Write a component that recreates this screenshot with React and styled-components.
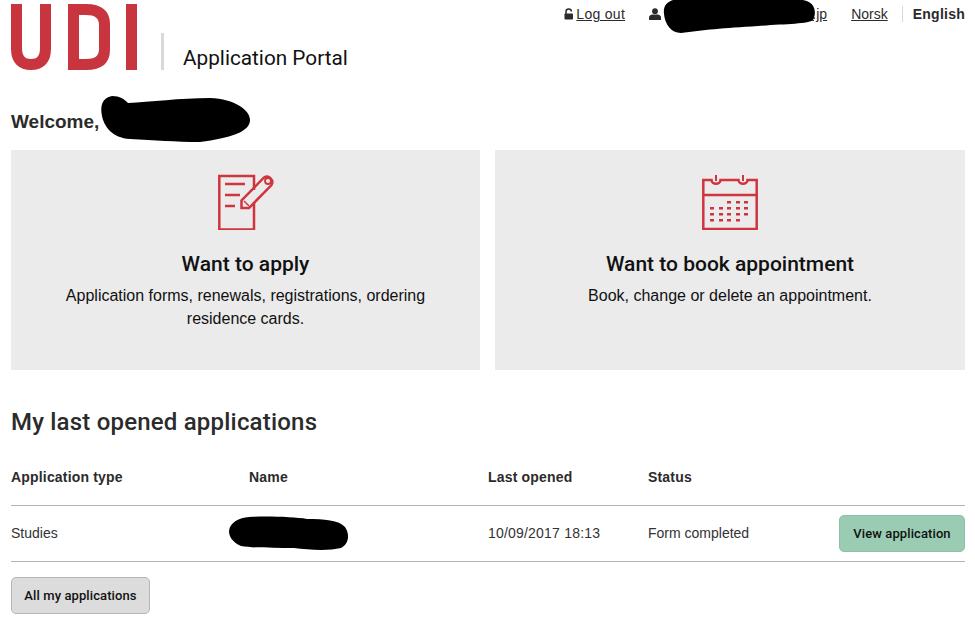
import React from "react";
import styled, { createGlobalStyle } from "styled-components";

const GlobalStyle = createGlobalStyle`
    html, body {
        margin: 0;
        padding: 0;
        background: #fff;
        color: #2b2b2b;
        font-family: "Liberation Sans", Arial, sans-serif;
    }
`;

const Page = styled.div`
    position: relative;
    width: 975px;
    height: 625px;
    overflow: hidden;
    box-sizing: border-box;
    padding: 0 10px 0 11px;
`;

const Header = styled.header`
    display: flex;
    justify-content: space-between;
    align-items: flex-start;
    height: 110px;
`;

const Brand = styled.div`
    display: flex;
    align-items: flex-end;
    padding-top: 4px;
    height: 66px;
`;

const Divider = styled.span`
    width: 3px;
    height: 37px;
    margin: 0 19px 0 24px;
    background: #d9d9d9;
`;

const PortalName = styled.span`
    font-family: Roboto, sans-serif;
    font-size: 20.75px;
    line-height: 24px;
    color: #111;
`;

const TopNav = styled.nav`
    display: flex;
    align-items: center;
    font-size: 14px;
    height: 16px;
    padding-top: 6px;
`;

const NavLink = styled.a`
    display: flex;
    align-items: center;
    color: #2b2b2b;
    text-decoration: underline;
    letter-spacing: ${({ $spacing }) => $spacing || 0}px;
    margin-left: ${({ $gap }) => $gap || 0}px;
    width: ${({ $width }) => ($width ? `${$width}px` : "auto")};
    justify-content: ${({ $width }) => ($width ? "space-between" : "flex-start")};
`;

const CurrentLang = styled.span`
    font-weight: 700;
    letter-spacing: 0.25px;
    margin-left: 14px;
    padding-left: 10px;
    border-left: 1px solid #d9d9d9;
`;

const Welcome = styled.h1`
    margin: 0;
    height: 40px;
    font-size: 19px;
    line-height: 24px;
    font-weight: 700;
    color: #2b2b2b;
`;

const Cards = styled.section`
    display: grid;
    grid-template-columns: 469px 470px;
    gap: 15px;
`;

const Card = styled.a`
    display: flex;
    flex-direction: column;
    align-items: center;
    height: 220px;
    box-sizing: border-box;
    padding: 24px 40px 0;
    background: #ebebeb;
    text-align: center;
    color: #111;
`;

const CardTitle = styled.h2`
    margin: 20px 0 0;
    font-family: Roboto, sans-serif;
    font-weight: 500;
    font-size: 21px;
    line-height: 28px;
    color: #111;
`;

const CardText = styled.p`
    margin: 6px 0 0;
    font-size: 16px;
    line-height: 23px;
`;

const SectionTitle = styled.h2`
    margin: 36px 0 0;
    font-family: Roboto, sans-serif;
    font-weight: 500;
    font-size: 24px;
    line-height: 32px;
    letter-spacing: 0.2px;
    color: #2b2b2b;
`;

const Columns = styled.div`
    display: grid;
    grid-template-columns: 238px 239px 160px 1fr auto;
    align-items: center;
`;

const TableHead = styled(Columns)`
    height: 68px;
    padding-top: 10px;
    box-sizing: border-box;
    border-bottom: 1px solid #b5b5b5;
    font-size: 14px;
    font-weight: 700;
    letter-spacing: 0.18px;
`;

const TableRow = styled(Columns)`
    height: 56px;
    box-sizing: border-box;
    border-bottom: 1px solid #b5b5b5;
    font-size: 14px;
    color: #333;

    span {
        margin-bottom: 2px;
    }
`;

const DateCell = styled.span`
    letter-spacing: 0.2px;
`;

const Button = styled.button`
    font-family: Roboto, sans-serif;
    font-weight: 500;
    font-size: 13px;
    letter-spacing: 0.1px;
    color: #111;
    background: ${({ $green }) => ($green ? "#9accb3" : "#dcdcdc")};
    border: 1px solid ${({ $green }) => ($green ? "#90bfa8" : "#b5b5b5")};
    border-radius: 5px;
    padding: 0;
    width: ${({ $width }) => $width}px;
    height: 37px;
`;

const Actions = styled.div`
    margin-top: 15px;
`;

const Redaction = styled.svg`
    position: absolute;
    left: ${({ $x }) => $x}px;
    top: ${({ $y }) => $y}px;
`;

function UdiLogo() {
    return (
        <svg width="126" height="66" viewBox="0 0 126 66" fill="#c9353f">
            <path d="M0 0h11v44c0 8 3 11 9 11s9-3 9-11V0h11v45c0 14-8 21-20 21S0 59 0 45z" />
            <path fillRule="evenodd" d="M57 0h18c16 0 24 7 24 20v26c0 13-8 20-24 20H57zM68 11v44h7c9 0 13-3 13-10V21c0-7-4-10-13-10z" />
            <rect x="115" y="0" width="11" height="66" />
        </svg>
    );
}

function LockIcon() {
    return (
        <svg width="10" height="12" viewBox="0 0 10 12" style={{ marginRight: 2 }}>
            <path fill="none" stroke="#2b2b2b" strokeWidth="1.5" d="M2 6V3.4C2 1.9 3.2 1 4.7 1s2.7.9 2.7 2.4" />
            <rect x="0.5" y="5.5" width="8.5" height="6" rx="0.8" fill="#2b2b2b" />
        </svg>
    );
}

function UserIcon() {
    return (
        <svg width="12" height="12" viewBox="0 0 12 12">
            <circle cx="6" cy="3.2" r="2.9" fill="#2b2b2b" />
            <path fill="#2b2b2b" d="M0 12V9.5C0 7.8 1.5 6.8 3.5 6.6h5c2 .2 3.5 1.2 3.5 2.9V12z" />
        </svg>
    );
}

function ApplyIcon() {
    return (
        <svg width="56" height="56" viewBox="0 0 56 56" fill="none" stroke="#cf343f" strokeWidth="2.5">
            <path d="M36 16V2H1.300v53.500H36V28" />
            <path d="M7 10h20M7 21h15M7 32h10" />
            <path d="M23.500 34v-7.500L46 3.500a5.500 5.500 0 0 1 7.500 7.500L31 34z" />
            <circle cx="50" cy="7" r="3" strokeWidth="1.800" />
            <path strokeWidth="1.400" d="M26 27l5 5" />
        </svg>
    );
}

function CalendarIcon() {
    const rows = [
        { y: 27, xs: [25, 34, 42] },
        { y: 33, xs: [8, 17, 25, 34, 42] },
        { y: 39, xs: [8, 17, 25, 34, 42] },
        { y: 45, xs: [8, 17, 25, 34] },
    ];
    return (
        <svg width="56" height="56" viewBox="0 0 56 56" fill="none" stroke="#cf343f" strokeWidth="2.5">
            <path d="M1.300 6H9.500c0 5 9 5 9 0h18c0 5 9 5 9 0h9.200v49H1.300z" />
            <path d="M1 21h54" />
            <path strokeWidth="2" d="M14 1v6M41 1v6" />
            {rows.map((row) =>
                row.xs.map((x) => (
                    <rect key={`${x}-${row.y}`} x={x} y={row.y} width="4" height="2.5" fill="#cf343f" stroke="none" />
                ))
            )}
        </svg>
    );
}

function Blob({ x, y, width, height, d }) {
    return (
        <Redaction $x={x} $y={y} width={width} height={height} viewBox={`0 0 ${width} ${height}`}>
            <path d={d} fill="#000" />
        </Redaction>
    );
}

function App() {
    return (
        <Page>
            <GlobalStyle />
            <Header>
                <Brand>
                    <UdiLogo />
                    <Divider />
                    <PortalName>Application Portal</PortalName>
                </Brand>
                <TopNav>
                    <NavLink href="#" $spacing={0.3}><LockIcon />Log out</NavLink>
                    <NavLink href="#" $gap={24} $width={178}><UserIcon /><span>.jp</span></NavLink>
                    <NavLink href="#" $gap={24}>Norsk</NavLink>
                    <CurrentLang>English</CurrentLang>
                </TopNav>
            </Header>

            <Welcome>Welcome,</Welcome>

            <Cards>
                <Card>
                    <ApplyIcon />
                    <CardTitle>Want to apply</CardTitle>
                    <CardText>Application forms, renewals, registrations, ordering residence cards.</CardText>
                </Card>
                <Card>
                    <CalendarIcon />
                    <CardTitle>Want to book appointment</CardTitle>
                    <CardText>Book, change or delete an appointment.</CardText>
                </Card>
            </Cards>

            <SectionTitle>My last opened applications</SectionTitle>

            <TableHead>
                <span>Application type</span>
                <span>Name</span>
                <span>Last opened</span>
                <span>Status</span>
            </TableHead>
            <TableRow>
                <span>Studies</span>
                <span />
                <DateCell>10/09/2017 18:13</DateCell>
                <span>Form completed</span>
                <Button $green $width={126}>View application</Button>
            </TableRow>

            <Actions>
                <Button $width={139}>All my applications</Button>
            </Actions>

            <Blob x={663} y={0} width={154} height={34} d="M10 0H140C152 2 154 12 150 20C146 24 120 24 95 26C60 28 40 30 18 33C8 33 2 24 1 14C0 6 4 2 10 0Z" />
            <Blob x={100} y={96} width={150} height={47} d="M12 0C20 0 24 3 28 7C50 6 80 2 110 2C135 3 150 14 150 24C150 36 130 42 100 46C75 46 55 44 30 43C12 42 4 30 2 20C0 10 2 2 12 0Z" />
            <Blob x={229} y={516} width={120} height={35} d="M20 1C40 0 65 1 78 3C95 3 110 4 116 11C121 18 120 28 112 32C100 35 80 34 65 32C45 32 25 32 12 30C3 26 0 20 0 15C1 6 10 2 20 1Z" />
        </Page>
    );
}

export default App;
